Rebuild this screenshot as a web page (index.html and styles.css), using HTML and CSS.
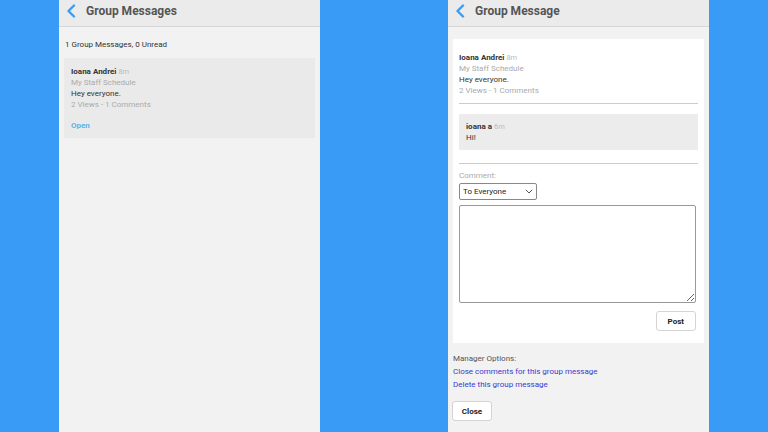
FILE: index.html
```html
<!DOCTYPE html>
<html lang="en">
<head>
    <meta charset="UTF-8">
    <meta name="viewport" content="width=device-width, initial-scale=1.0">
    <title>Group Messages</title>
    <link rel="stylesheet" href="styles.css">
</head>
<body>
    <div class="screens">
        <!-- list screen -->
        <div class="panel">
            <div class="header">
                <svg class="back" width="10" height="14" viewBox="0 0 10 14"><path d="M8 1.5 L2.5 7 L8 12.5" fill="none" stroke="#3a9cf2" stroke-width="2.4" stroke-linecap="round" stroke-linejoin="round"/></svg>
                <h1>Group Messages</h1>
            </div>
            <div class="content">
                <p class="count">1 Group Messages, 0 Unread</p>
                <div class="msg-card">
                    <div><span class="name">Ioana Andrei</span> <span class="time">8m</span></div>
                    <div class="muted">My Staff Schedule</div>
                    <div>Hey everyone.</div>
                    <div class="muted">2 Views - 1 Comments</div>
                    <a class="open" href="#">Open</a>
                </div>
            </div>
        </div>

        <!-- detail screen -->
        <div class="panel">
            <div class="header">
                <svg class="back" width="10" height="14" viewBox="0 0 10 14"><path d="M8 1.5 L2.5 7 L8 12.5" fill="none" stroke="#3a9cf2" stroke-width="2.4" stroke-linecap="round" stroke-linejoin="round"/></svg>
                <h1>Group Message</h1>
            </div>
            <div class="content detail">
                <div class="white-card">
                    <div class="post">
                        <div><span class="name">Ioana Andrei</span> <span class="time">8m</span></div>
                        <div class="muted">My Staff Schedule</div>
                        <div>Hey everyone.</div>
                        <div class="muted">2 Views - 1 Comments</div>
                    </div>
                    <div class="comment">
                        <div><span class="name">ioana a</span> <span class="time">6m</span></div>
                        <div>Hi!</div>
                    </div>
                    <div class="reply">
                        <label class="muted" for="to">Comment:</label>
                        <div class="select">
                            <span>To Everyone</span>
                            <svg width="8" height="5" viewBox="0 0 8 5"><path d="M0.8 0.8 L4 4 L7.2 0.8" fill="none" stroke="#555" stroke-width="1"/></svg>
                        </div>
                        <textarea id="to"></textarea>
                        <div class="actions">
                            <button type="button" class="btn">Post</button>
                        </div>
                    </div>
                </div>
                <div class="manager">
                    <div class="label">Manager Options:</div>
                    <a href="#">Close comments for this group message</a>
                    <a href="#">Delete this group message</a>
                </div>
                <button type="button" class="btn close">Close</button>
            </div>
        </div>
    </div>
</body>
</html>
```

FILE: styles.css
```css
body {
    margin: 0;
    background-color: #3a9bf6;
    font-family: Roboto, "Liberation Sans", sans-serif;
    font-size: 8px;
    color: #333;
}
.screens {
    display: flex;
    justify-content: center;
    gap: 128px;
    height: 432px;
}
.panel {
    width: 261px;
    background: #f2f2f2;
    overflow: hidden;
}
.header {
    height: 21px;
    display: flex;
    align-items: center;
    gap: 10px;
    padding: 0 0 5px 7px;
    background: #ebebeb;
    border-bottom: 1px solid #d6d6d6;
}
.header h1 {
    margin: 0;
    font-size: 12px;
    font-weight: bold;
    color: #555;
}
.content {
    padding: 8px 5px;
}
.count {
    margin: 4px 1px 0;
    line-height: 11px;
}
.msg-card {
    margin-top: 8px;
    background: #eaeaea;
    padding: 8px 7px 7px;
    line-height: 11px;
}
.name {
    font-weight: bold;
}
.time {
    color: #bbb;
    font-size: 7.5px;
}
.muted {
    color: #aaa;
}
.open {
    display: block;
    margin-top: 10px;
    color: #5ab2ea;
    font-weight: bold;
    text-decoration: none;
}
.detail {
    padding: 12px 5px;
}
.white-card {
    background: #fff;
    padding: 13px 6px 12px;
    line-height: 11px;
}
.post {
    padding-bottom: 7px;
    border-bottom: 1px solid #ccc;
}
.comment {
    margin-top: 10px;
    background: #ececec;
    padding: 7px 7px 7px;
    border-bottom: 1px solid #fff;
}
.reply {
    margin-top: 12px;
    padding-top: 6px;
    border-top: 1px solid #ccc;
}
.reply label {
    display: block;
}
.select {
    margin-top: 2px;
    width: 70px;
    height: 15px;
    padding: 0 3px;
    display: flex;
    align-items: center;
    justify-content: space-between;
    border: 1px solid #888;
    border-radius: 2px;
    color: #222;
}
textarea {
    display: block;
    box-sizing: border-box;
    width: 237px;
    height: 98px;
    margin-top: 5px;
    border: 1px solid #999;
    border-radius: 2px;
    resize: vertical;
}
.actions {
    display: flex;
    justify-content: flex-end;
    margin-top: 8px;
    padding-right: 2px;
}
.btn {
    font-family: Roboto, "Liberation Sans", sans-serif;
    font-size: 8px;
    font-weight: bold;
    color: #222;
    background: #fff;
    border: 1px solid #d4d4d4;
    border-radius: 3px;
    height: 20px;
    padding: 0 11px;
}
.manager {
    padding: 9px 0 0 0;
    line-height: 13px;
}
.manager .label {
    color: #555;
}
.manager a {
    display: block;
    color: #3a3ad0;
    text-decoration: none;
}
.close {
    margin-top: 10px;
    margin-left: -1px;
    width: 40px;
    padding: 0;
}
```
